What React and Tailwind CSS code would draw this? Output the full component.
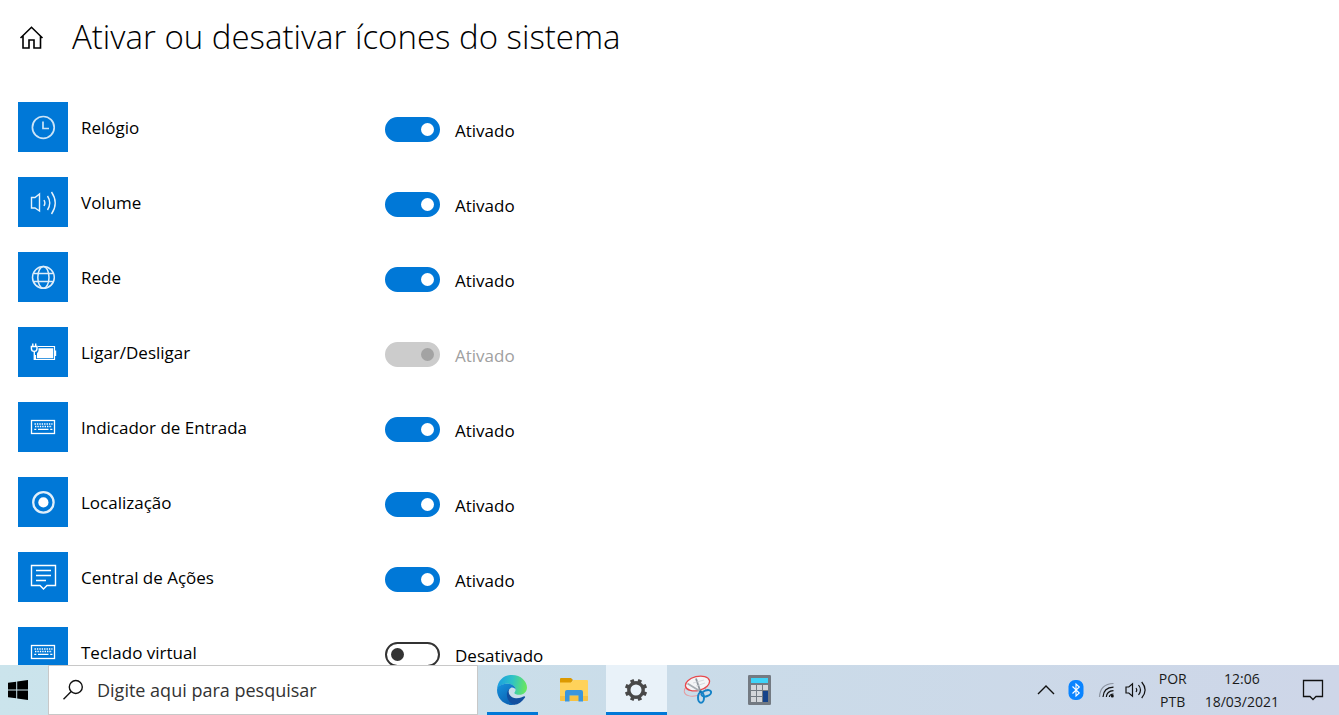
import React, { useState } from "react";

const ClockIcon = () => (
  <g opacity="0.8" strokeWidth="1.7">
    <circle cx="25.3" cy="25.4" r="10.9" />
    <path d="M25 19.5V26.5H31" />
  </g>
);

const VolumeIcon = () => (
  <g strokeWidth="1.4" opacity="0.9">
    <path d="M13.5 20.5H17L21.5 17V34L17 31H13.5Z" />
    <path d="M26 23Q27.8 26 26 29" />
    <path d="M29.5 19Q34 26 29.5 33" />
    <path d="M33.500 15Q41 26 33.500 37" />
  </g>
);

const GlobeIcon = () => (
  <g strokeWidth="1.5" opacity="0.88">
    <circle cx="25.4" cy="25.4" r="10.9" />
    <ellipse cx="25.4" cy="25.4" rx="5.6" ry="10.9" />
    <path d="M15.5 21.5H35.5M15.5 29.5H35.5" />
  </g>
);

const BatteryIcon = () => (
  <g>
    <path d="M20 19.5H36.5V32.5H17.5V28" strokeWidth="1.2" />
    <path d="M37.5 23.5V29" />
    <path d="M20.5 21.3H35.2V31.2H19V26.5L20.5 24Z" fill="white" stroke="none" />
    <path d="M14.8 16.500V19.5M17.7 16.500V19.5M16.3 24V33" />
    <path d="M13.4 19.5H19V21.5Q19 24.4 16.2 24.4T13.4 21.5Z" />
  </g>
);

const KeyboardIcon = () => (
  <g strokeWidth="1.3">
    <rect x="13.5" y="18.5" width="23" height="13" />
    <path d="M16.5 22H34.5M17 24.5H34" strokeDasharray="1.4 1" />
    <path d="M16.3 27.4H18.3M20 27.4H30.5M32.2 27.4H34.4" />
  </g>
);

const LocationIcon = () => (
  <g>
    <circle cx="25.4" cy="25.4" r="10.2" strokeWidth="2.3" opacity="0.88" />
    <circle cx="25.4" cy="25.4" r="5.1" fill="white" stroke="none" />
  </g>
);

const ActionCenterIcon = () => (
  <g strokeWidth="1.4">
    <path d="M13.5 13.5H37.5V33.5H29L25.5 37L22 33.5H13.5Z" />
    <path d="M18 18.5H33M18 23.5H33M18 28.5H28" />
  </g>
);

const ITEMS = [
  { id: "clock", label: "Relógio", Icon: ClockIcon, on: true },
  { id: "volume", label: "Volume", Icon: VolumeIcon, on: true },
  { id: "network", label: "Rede", Icon: GlobeIcon, on: true },
  { id: "power", label: "Ligar/Desligar", Icon: BatteryIcon, on: true, disabled: true },
  { id: "input", label: "Indicador de Entrada", Icon: KeyboardIcon, on: true },
  { id: "location", label: "Localização", Icon: LocationIcon, on: true },
  { id: "actions", label: "Central de Ações", Icon: ActionCenterIcon, on: true },
  { id: "keyboard", label: "Teclado virtual", Icon: KeyboardIcon, on: false },
];

const SettingRow = ({ item, checked, onChange }) => {
  const { id, label, Icon, disabled } = item;

  return (
    <li className="grid h-[50px] grid-cols-[367px_1fr] items-center">
      <label htmlFor={id} className="flex items-center gap-[13px]">
        <span className="h-[50px] w-[50px] shrink-0 bg-[#0078d7]">
          <svg viewBox="0 0 50 50" className="h-full w-full" fill="none" stroke="white" strokeWidth="1.4">
            <Icon />
          </svg>
        </span>
        <span className="pt-0.5">{label}</span>
      </label>
      <div className="flex items-center gap-[15px] pt-[5px]">
        <input
          id={id}
          type="checkbox"
          role="switch"
          checked={checked}
          disabled={disabled}
          onChange={onChange}
          className="flex h-[25px] w-[55px] shrink-0 appearance-none items-center rounded-full border-2 border-[#333] px-1 before:h-[13px] before:w-[13px] before:rounded-full before:bg-[#333] checked:justify-end checked:border-[#0078d7] checked:bg-[#0078d7] checked:before:bg-white disabled:border-[#ccc] disabled:bg-[#ccc] disabled:before:bg-[#a3a3a3]"
        />
        <span className={disabled ? "pt-0.5 text-[#a0a0a0]" : "pt-0.5 text-black"}>
          {checked ? "Ativado" : "Desativado"}
        </span>
      </div>
    </li>
  );
};

const EdgeIcon = () => (
  <svg viewBox="0 0 30 30" className="h-[30px] w-[30px]">
    <defs>
      <linearGradient id="edgeTop" x1="0" y1="0.4" x2="1" y2="0.5">
        <stop offset="0" stopColor="#1b9de2" />
        <stop offset="0.5" stopColor="#2fc3c5" />
        <stop offset="1" stopColor="#6be85b" />
      </linearGradient>
      <linearGradient id="edgeSide" x1="0" y1="0" x2="0.6" y2="1">
        <stop offset="0" stopColor="#1793dc" />
        <stop offset="1" stopColor="#0b62b4" />
      </linearGradient>
    </defs>
    <path d="M0 14C1 5 7 0 15 0C24 0 30 6.500 30 12.500C30 17 26.500 19.800 22.500 19.800C19.500 19.800 17.400 19 17.400 18C17.400 17.200 18.600 16.700 18.600 14.600C18.600 11.500 15 8.700 10.500 8.700C5.500 8.700 1.500 11 0 14Z" fill="url(#edgeTop)" />
    <path d="M0 15C0 11 4.500 8.700 10.500 8.700C15.500 8.700 18.600 11.500 18.600 14.500C17.500 12.700 15.500 12 13.600 13C9 15.300 10 25 18 29.600C8 31.500 0 24 0 15Z" fill="url(#edgeSide)" />
    <path d="M13.600 13C9.800 15 11.500 22.800 19 23.200C23 23.400 25.500 21.600 27.300 21.200C28.200 21.200 28.300 22 27.800 22.700C25 27 21.300 29.400 17.500 29.700C12 28 9.200 23 10 18C10.500 15.500 12 13.600 13.600 13Z" fill="#124f9f" />
  </svg>
);

const ExplorerIcon = () => (
  <svg viewBox="0 0 28 24" className="h-6 w-7">
    <path d="M0 1Q0 0 1 0H11L13 2L11 5H0Z" fill="#dc9900" />
    <path d="M0 4.500H11L13.500 2H27Q28 2 28 3V22Q28 23 27 23H1Q0 23 0 22Z" fill="#ffd25a" />
    <path d="M0 18H28V22Q28 23 27 23H1Q0 23 0 22Z" fill="#f7c243" />
    <path d="M5 23.500V14Q5 12 7 12H21Q23 12 23 14V23.500H18.500V17.500H9.500V23.500Z" fill="#3a96dd" />
  </svg>
);

const TEETH = [0, 45, 90, 135, 180, 225, 270, 315];

const GearIcon = () => (
  <svg viewBox="0 0 24 24" className="h-6 w-6" fill="none" stroke="#484848">
    <circle cx="12" cy="12" r="7.200" strokeWidth="3.400" />
    {TEETH.map((angle) => (
      <path key={angle} d="M12 4.500V0.800" strokeWidth="3.800" transform={`rotate(${angle + 22.5} 12 12)`} />
    ))}
  </svg>
);

const SnipIcon = () => (
  <svg viewBox="0 0 30 30" className="h-[30px] w-[30px]" fill="none">
    <ellipse cx="12" cy="14.500" rx="11" ry="6.500" transform="rotate(-12 12 14.500)" stroke="#e59b9f" strokeWidth="1" />
    <ellipse cx="14.500" cy="8.500" rx="12.300" ry="7" transform="rotate(-14 14.500 8.500)" fill="#f4f5f7" stroke="#e8484c" strokeWidth="1.300" />
    <path d="M13 3.500L17.500 17" stroke="#8e959c" strokeWidth="1.800" />
    <path d="M4.500 8.500L17.500 16.500" stroke="#a7adb3" strokeWidth="1.800" />
    <path d="M10 8L21 5M13 11L22 8" stroke="#cfd3d8" strokeWidth="0.800" />
    <ellipse cx="18" cy="22.500" rx="3" ry="5.300" stroke="#1583c7" strokeWidth="2" />
    <ellipse cx="23.300" cy="18.300" rx="5" ry="2.900" transform="rotate(-20 23.300 18.300)" stroke="#1583c7" strokeWidth="2" />
    <circle cx="17.500" cy="16.500" r="1.200" fill="#1270ad" />
  </svg>
);

const CalculatorIcon = () => (
  <svg viewBox="0 0 23 30" className="h-[30px] w-[23px]">
    <rect width="23" height="30" rx="1.200" fill="#737a82" />
    <rect x="3" y="3" width="17" height="5" fill="#3fd3f7" />
    <path d="M3 10H8V15H3ZM9 10H14V15H9ZM15 10H20V15H15ZM3 16H8V21H3ZM9 16H14V21H9ZM3 22H8V27H3ZM9 22H14V27H9Z" fill="#d3d6da" />
    <rect x="15" y="16" width="5" height="11" fill="#15438a" />
  </svg>
);

const APPS = [
  { name: "Microsoft Edge", Icon: EdgeIcon, open: true },
  { name: "Explorador de Arquivos", Icon: ExplorerIcon },
  { name: "Configurações", Icon: GearIcon, active: true },
  { name: "Ferramenta de Captura", Icon: SnipIcon },
  { name: "Calculadora", Icon: CalculatorIcon },
];

const Taskbar = () => {
  const [query, setQuery] = useState("");

  return (
    <footer className="flex h-[50px] shrink-0 bg-linear-to-r from-[#cbe4ec] via-[#cadce9] to-[#ced6e8] text-[#1a1a1a]">
      <button type="button" aria-label="Iniciar" className="flex w-12 items-center pl-2">
        <svg viewBox="0 0 20 20" className="h-5 w-5" fill="black">
          <path d="M0 2.800L8.200 1.700V9.500H0ZM9.200 1.500L20 0V9.500H9.200ZM0 10.500H8.200V18.300L0 17.200ZM9.200 10.500H20V20L9.200 18.500Z" />
        </svg>
      </button>

      <label className="flex w-[430px] items-center gap-3 border border-[#c8c8c8] bg-white pl-3">
        <svg viewBox="0 0 24 24" className="h-6 w-6 shrink-0" fill="none" stroke="#111" strokeWidth="1.400">
          <circle cx="14.800" cy="9" r="6.500" />
          <path d="M10.200 13.600L2.500 21.300" />
        </svg>
        <input
          type="text"
          aria-label="Pesquisar"
          placeholder="Digite aqui para pesquisar"
          value={query}
          onChange={(e) => setQuery(e.target.value)}
          className="w-full text-[18px] outline-none placeholder:text-[#333]"
        />
      </label>

      <nav className="ml-1 flex gap-px">
        {APPS.map(({ name, Icon, open, active }) => (
          <button
            key={name}
            type="button"
            aria-label={name}
            className={active ? "flex w-[61px] flex-col bg-[#e9f2f9]" : "flex w-[61px] flex-col"}
          >
            <span className="flex w-full flex-1 items-center justify-center pt-[3px] pr-0.5">
              <Icon />
            </span>
            <span className={active ? "h-[3px] w-full bg-[#0078d7]" : open ? "mx-auto h-[3px] w-[51px] bg-[#0078d7]" : "h-[3px]"} />
          </button>
        ))}
      </nav>

      <div className="ml-auto flex items-center pr-[15px] text-center text-[14px] leading-[23px]">
        <button type="button" aria-label="Mostrar ícones ocultos">
          <svg viewBox="0 0 18 18" className="h-[18px] w-[18px]" fill="none" stroke="#111" strokeWidth="1.400">
            <path d="M1 13L9 5L17 13" />
          </svg>
        </button>
        <button type="button" aria-label="Bluetooth" className="ml-[13px]">
          <svg viewBox="0 0 16 20" className="h-5 w-4" fill="none" stroke="white" strokeWidth="1.100">
            <rect x="0.500" width="15" height="20" rx="6.500" fill="#0a84ff" stroke="none" />
            <path d="M4.500 6.500L11.300 13L8 16V4L11.300 7L4.500 13.500" />
          </svg>
        </button>
        <button type="button" aria-label="Rede" className="ml-[14px]">
          <svg viewBox="0 0 18 18" className="h-[18px] w-[18px]" fill="none" stroke="#111" strokeWidth="1.200">
            <path d="M1.500 16Q2 3 15.500 2.500" stroke="#8b93a0" />
            <path d="M5 16Q5.500 6.500 15.500 6.200" />
            <path d="M8.300 16Q8.700 10 15.500 9.600" />
            <path d="M11.300 16Q11.700 13.300 15.500 13" />
            <circle cx="14.300" cy="15" r="1.500" fill="#111" stroke="none" />
          </svg>
        </button>
        <button type="button" aria-label="Volume" className="ml-[9px]">
          <svg viewBox="0 0 22 20" className="h-5 w-[22px]" fill="none" stroke="#111" strokeWidth="1.200">
            <path d="M1 7H3.800L7.500 3.800V16.200L3.800 13H1Z" />
            <path d="M11 8Q12.500 10 11 12M13.500 5Q17.500 10 13.500 15M16.700 2Q23.500 10 16.700 18" />
          </svg>
        </button>
        <button type="button" className="ml-3">
          POR
          <br />
          PTB
        </button>
        <button type="button" className="ml-[18px]">
          12:06
          <br />
          18/03/2021
        </button>
        <button type="button" aria-label="Central de Ações" className="ml-[23px]">
          <svg viewBox="0 0 22 22" className="h-[22px] w-[22px]" fill="none" stroke="#111" strokeWidth="1.300">
            <path d="M1.500 1.500H20.500V17.500H14L11 20.500L8 17.500H1.500Z" />
          </svg>
        </button>
      </div>
    </footer>
  );
};

const App = () => {
  const [state, setState] = useState(
    Object.fromEntries(ITEMS.map((item) => [item.id, item.on]))
  );

  const toggle = (id) => {
    setState({ ...state, [id]: !state[id] });
  };

  return (
    <div className="flex h-screen flex-col bg-white font-['Open_Sans','Noto_Sans',sans-serif] text-black">
      <main className="min-h-0 flex-1 overflow-hidden px-[18px] pt-3">
        <header className="flex h-[50px] items-center gap-7">
          <button type="button" aria-label="Início">
            <svg viewBox="0 0 26 26" className="h-[26px] w-[26px]" fill="none" stroke="black" strokeWidth="1.600">
              <path d="M2.500 14L13.500 3.300L24.500 14M5 12V24H11V16H16V24H22.500V12" />
            </svg>
          </button>
          <h1 className="text-[33px] font-light">Ativar ou desativar ícones do sistema</h1>
        </header>

        <ul className="mt-10 flex flex-col gap-[25px] text-[17px]">
          {ITEMS.map((item) => (
            <SettingRow
              key={item.id}
              item={item}
              checked={state[item.id]}
              onChange={() => toggle(item.id)}
            />
          ))}
        </ul>
      </main>
      <Taskbar />
    </div>
  );
};

export default App;
